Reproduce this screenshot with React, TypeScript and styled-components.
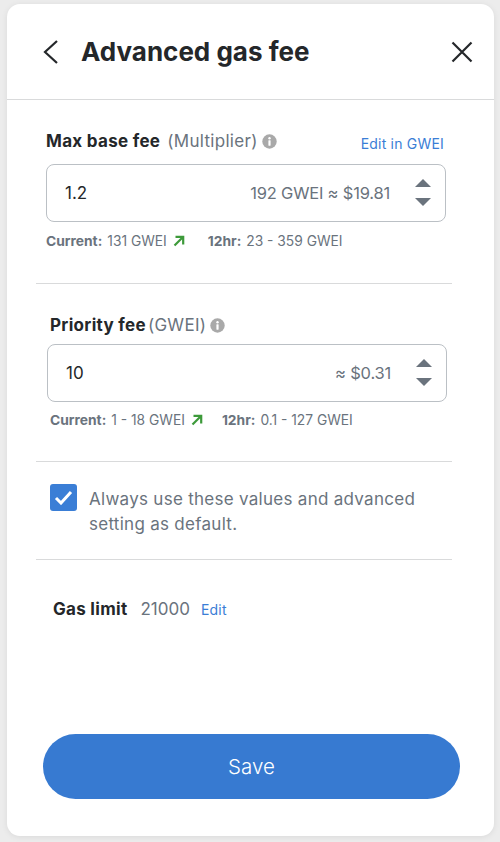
import React from 'react';
import styled, { createGlobalStyle } from 'styled-components';

const GlobalStyle = createGlobalStyle`
  html, body {
    margin: 0;
    padding: 0;
    height: 842px;
    overflow: hidden;
    background: #ececec;
    font-family: Inter, Lato, sans-serif;
  }
  * {
    box-sizing: border-box;
  }
`;

const Page = styled.div`
  width: 500px;
  height: 842px;
  padding: 4px 6px 6px 7px;
`;

const Card = styled.div`
  width: 487px;
  height: 832px;
  display: flex;
  flex-direction: column;
  background: #fff;
  border-radius: 13px;
  box-shadow: 0 1px 6px rgba(0, 0, 0, 0.08);
`;

const Header = styled.div`
  height: 96px;
  display: flex;
  align-items: center;
  padding: 0 21px 0 35px;
  border-bottom: 1px solid #d9dadb;
`;

const Title = styled.h1`
  flex: 1;
  margin: 0 0 0 22px;
  font-size: 26px;
  font-weight: 700;
  color: #24272a;
`;

const IconButton = styled.button`
  display: flex;
  padding: 0;
  border: 0;
  background: none;
  cursor: pointer;
`;

const Section = styled.div<{ $left: number; $height: number }>`
  width: 416px;
  height: ${(p) => p.$height}px;
  margin-left: 29px;
  padding-left: ${(p) => p.$left}px;
  border-bottom: 1px solid #d9dadb;
`;

const LabelRow = styled.div<{ $gap: number; $inset: number }>`
  display: flex;
  align-items: center;
  width: 398px;
  height: 20px;
  margin-top: 31px;
  margin-bottom: ${(p) => p.$gap + 1}px;
  padding-left: ${(p) => p.$inset}px;
`;

const Label = styled.span`
  font-size: 17px;
  font-weight: 700;
  color: #24272a;
  letter-spacing: 0.3px;
`;

const LabelNote = styled.span<{ $gap: number }>`
  margin-left: ${(p) => p.$gap}px;
  font-size: 17px;
  color: #6a737d;
  letter-spacing: 0.3px;
`;

const InfoIcon = styled.svg`
  margin-left: 4px;
`;

const EditLink = styled.a`
  font-size: 14px;
  color: #3a7ed6;
  letter-spacing: 0.2px;
  text-decoration: none;
  cursor: pointer;
`;

const EditInGwei = styled(EditLink)`
  margin-left: auto;
  margin-top: 4px;
`;

const InputBox = styled.div`
  width: 400px;
  height: 58px;
  display: flex;
  align-items: center;
  padding: 0 14px 0 18px;
  border: 1.5px solid #bbc0c5;
  border-radius: 8px;
`;

const InputValue = styled.span`
  flex: 1;
  font-size: 17px;
  color: #24272a;
`;

const InputConversion = styled.span`
  margin-right: 25px;
  font-size: 16.5px;
  color: #6a737d;
  letter-spacing: -0.2px;
`;

const Stepper = styled.div`
  display: flex;
  flex-direction: column;
  gap: 11px;
  margin-top: -2px;
`;

const Caret = styled.span<{ $up?: boolean }>`
  width: 0;
  height: 0;
  border-left: 8px solid transparent;
  border-right: 8px solid transparent;
  ${(p) =>
    p.$up
      ? 'border-bottom: 8px solid #6a737d;'
      : 'border-top: 8px solid #6a737d;'}
`;

const HintRow = styled.div<{ $top: number; $inset: number }>`
  display: flex;
  align-items: center;
  height: 18px;
  margin-top: ${(p) => p.$top}px;
  padding-left: ${(p) => p.$inset}px;
  font-size: 13.8px;
  color: #6a737d;
`;

const HintGroup = styled.span<{ $gap?: number }>`
  display: flex;
  align-items: center;
  margin-right: ${(p) => p.$gap ?? 0}px;
`;

const HintKey = styled.b`
  margin-right: 5px;
  font-weight: 700;
`;

const TrendIcon = styled.svg`
  margin-left: 6px;
`;

const CheckRow = styled.label`
  display: flex;
  align-items: flex-start;
  padding-top: 22px;
  cursor: pointer;
`;

const CheckBox = styled.span`
  flex: none;
  width: 27px;
  height: 27px;
  display: flex;
  align-items: center;
  justify-content: center;
  margin-right: 12px;
  background: #3a7ed6;
  border-radius: 3px;
`;

const CheckText = styled.span`
  width: 345px;
  margin-top: 3px;
  font-size: 17px;
  line-height: 25px;
  color: #6a737d;
  letter-spacing: 0.28px;
`;

const GasLimitRow = styled.div`
  display: flex;
  align-items: center;
  height: 20px;
  margin: 39px 0 0 46px;
`;

const GasValue = styled.span`
  margin: 0 11px 0 13px;
  font-size: 17px;
  color: #6a737d;
`;

const SaveButton = styled.button`
  width: 417px;
  height: 65px;
  margin: auto 0 37px 36px;
  border: 0;
  border-radius: 33px;
  background: #377ad1;
  color: #fff;
  font-family: inherit;
  font-size: 20.5px;
  font-weight: 300;
  cursor: pointer;
`;

const Info = () => (
  <InfoIcon width="15" height="15" viewBox="0 0 15 15">
    <circle cx="7.5" cy="7.5" r="7.2" fill="#a9a9a9" />
    <circle cx="7.5" cy="4.2" r="1.2" fill="#fff" />
    <rect x="6.4" y="6.3" width="2.2" height="5.4" rx="0.4" fill="#fff" />
  </InfoIcon>
);

const Trend = () => (
  <TrendIcon width="12" height="12" viewBox="0 0 12 12">
    <path
      d="M1.5 10.5 L9.5 2.5 M2.5 1.8 H10.2 V9.5"
      fill="none"
      stroke="#3d9a3a"
      strokeWidth="2.2"
    />
  </TrendIcon>
);

const Steppers = () => (
  <Stepper>
    <Caret $up />
    <Caret />
  </Stepper>
);

const App = () => {
  return (
    <>
      <GlobalStyle />
      <Page>
        <Card>
          <Header>
            <IconButton aria-label="Back">
              <svg width="17" height="26" viewBox="0 0 17 26">
                <path
                  d="M15 2 L3 13 L15 24"
                  fill="none"
                  stroke="#24272a"
                  strokeWidth="2.2"
                />
              </svg>
            </IconButton>
            <Title>Advanced gas fee</Title>
            <IconButton aria-label="Close">
              <svg width="22" height="22" viewBox="0 0 22 22">
                <path
                  d="M1.5 1.5 L20.5 20.5 M20.5 1.5 L1.5 20.5"
                  fill="none"
                  stroke="#24272a"
                  strokeWidth="2.2"
                />
              </svg>
            </IconButton>
          </Header>

          <Section $left={10} $height={184}>
            <LabelRow $gap={12} $inset={0}>
              <Label>Max base fee</Label>
              <LabelNote $gap={7}>(Multiplier)</LabelNote>
              <Info />
              <EditInGwei>Edit in GWEI</EditInGwei>
            </LabelRow>
            <InputBox>
              <InputValue>1.2</InputValue>
              <InputConversion>192 GWEI ≈ $19.81</InputConversion>
              <Steppers />
            </InputBox>
            <HintRow $top={10} $inset={0}>
              <HintGroup $gap={23}>
                <HintKey>Current:</HintKey> 131 GWEI <Trend />
              </HintGroup>
              <HintGroup>
                <HintKey>12hr:</HintKey> 23 - 359 GWEI
              </HintGroup>
            </HintRow>
          </Section>

          <Section $left={11} $height={178}>
            <LabelRow $gap={8} $inset={3}>
              <Label>Priority fee</Label>
              <LabelNote $gap={2}>(GWEI)</LabelNote>
              <Info />
            </LabelRow>
            <InputBox>
              <InputValue>10</InputValue>
              <InputConversion>≈ $0.31</InputConversion>
              <Steppers />
            </InputBox>
            <HintRow $top={9} $inset={3}>
              <HintGroup $gap={19}>
                <HintKey>Current:</HintKey> 1 - 18 GWEI <Trend />
              </HintGroup>
              <HintGroup>
                <HintKey>12hr:</HintKey> 0.1 - 127 GWEI
              </HintGroup>
            </HintRow>
          </Section>

          <Section $left={14} $height={98}>
            <CheckRow>
              <CheckBox>
                <svg width="19" height="15" viewBox="0 0 19 15">
                  <path
                    d="M2 8 L7 13 L17 2"
                    fill="none"
                    stroke="#fff"
                    strokeWidth="3"
                  />
                </svg>
              </CheckBox>
              <CheckText>
                Always use these values and advanced setting as default.
              </CheckText>
            </CheckRow>
          </Section>

          <GasLimitRow>
            <Label>Gas limit</Label>
            <GasValue>21000</GasValue>
            <EditLink>Edit</EditLink>
          </GasLimitRow>

          <SaveButton>Save</SaveButton>
        </Card>
      </Page>
    </>
  );
};

export default App;
